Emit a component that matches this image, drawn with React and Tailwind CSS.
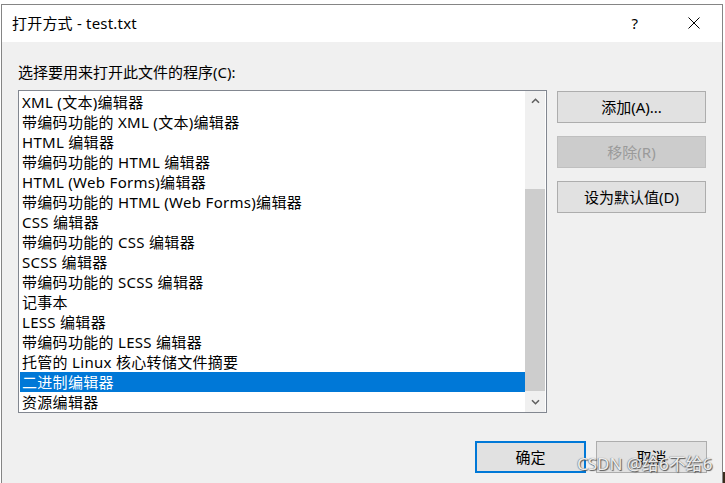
import React from "react";

const FONT = { fontFamily: '"Noto Sans", "Noto Sans CJK SC", sans-serif' };

const items = [
  "XML (文本)编辑器",
  "带编码功能的 XML (文本)编辑器",
  "HTML 编辑器",
  "带编码功能的 HTML 编辑器",
  "HTML (Web Forms)编辑器",
  "带编码功能的 HTML (Web Forms)编辑器",
  "CSS 编辑器",
  "带编码功能的 CSS 编辑器",
  "SCSS 编辑器",
  "带编码功能的 SCSS 编辑器",
  "记事本",
  "LESS 编辑器",
  "带编码功能的 LESS 编辑器",
  "托管的 Linux 核心转储文件摘要",
  "二进制编辑器",
  "资源编辑器",
];

function Chevron({ down }) {
  return (
    <svg width="9" height="6" viewBox="0 0 9 6">
      <path
        d={down ? "M1 1.2 L4.5 4.7 L8 1.2" : "M1 4.8 L4.5 1.3 L8 4.8"}
        fill="none"
        stroke="#606060"
        strokeWidth="1.6"
      />
    </svg>
  );
}

function Btn({ children, disabled, primary, className = "" }) {
  let cls =
    "h-[32px] flex items-center justify-center text-[15px] leading-[20px] ";
  if (disabled) cls += "bg-[#cccccc] border border-[#bfbfbf] text-[#9a9a9a] ";
  else if (primary) cls += "bg-[#e1e1e1] border-2 border-[#0078d7] text-black ";
  else cls += "bg-[#e1e1e1] border border-[#adadad] text-black ";
  return <div className={cls + className}>{children}</div>;
}

export default function App() {
  return (
    <div
      className="relative w-[725px] h-[483px] bg-white overflow-hidden"
      style={FONT}
    >
      <div className="ml-[1px] mt-[4px] w-[722px] h-[479px] border border-b-0 border-[#858585] flex flex-col">
        {/* title bar */}
        <div className="h-[37px] bg-white flex items-center pl-[10px] pr-[22px] shrink-0">
          <div className="text-[15px] leading-[20px] text-black -mt-[1px] tracking-[0.2px]">
            打开方式 - test.txt
          </div>
          <div className="flex-1" />
          <div className="text-[15px] leading-[20px] text-black mr-[50px] -mt-[1px]">
            ?
          </div>
          <svg width="12" height="12" viewBox="0 0 12 12" className="-mt-[1px]">
            <path d="M0.5 0.5 L11.5 11.5 M11.5 0.5 L0.5 11.5" stroke="#000" strokeWidth="1" />
          </svg>
        </div>
        {/* body */}
        <div className="flex-1 bg-[#f0f0f0] pl-[16px] pr-[15px] pt-[20px] flex flex-col">
          <div className="text-[15px] leading-[20px] text-black">
            选择要用来打开此文件的程序(C):
          </div>
          <div className="flex mt-[8px]">
            {/* listbox */}
            <div className="w-[529px] h-[323px] border border-[#828790] bg-white flex">
              <div className="flex-1 pt-[1px] pl-[1px]">
                {items.map((t, i) => (
                  <div
                    key={i}
                    className={
                      "h-[20px] pl-[2px] text-[15px] leading-[20px] whitespace-nowrap tracking-[0.3px] " +
                      (i === 14 ? "bg-[#0078d7] text-white" : "text-black")
                    }
                  >
                    {t}
                  </div>
                ))}
              </div>
              <div className="w-[20px] bg-[#f0f0f0] flex flex-col mr-[1px]">
                <div className="h-[17px] flex items-center justify-center pt-[2px]">
                  <Chevron />
                </div>
                <div className="h-[81px]" />
                <div className="h-[202px] bg-[#cdcdcd]" />
                <div className="flex-1 flex items-center justify-center">
                  <Chevron down />
                </div>
              </div>
            </div>
            {/* right buttons */}
            <div className="ml-[10px] mt-[1px] w-[149px] flex flex-col gap-[13px]">
              <Btn>添加(A)...</Btn>
              <Btn disabled>移除(R)</Btn>
              <Btn>设为默认值(D)</Btn>
            </div>
          </div>
          <div className="flex justify-end gap-[10px] mt-[28px]">
            <Btn primary className="w-[111px]">确定</Btn>
            <Btn className="w-[111px]">取消</Btn>
          </div>
        </div>
      </div>
      {/* watermark */}
      <div
        className="absolute left-[577px] top-[453px] text-[17px] leading-[22px] text-[#ececec] whitespace-nowrap [text-shadow:1px_1px_1px_#555,-0.5px_-0.5px_1px_#777]"
      >
        CSDN @给6不给6
      </div>
      <div className="absolute left-[723px] top-[472px] w-[2px] h-[11px] bg-[#3a2c1c]" />
    </div>
  );
}
